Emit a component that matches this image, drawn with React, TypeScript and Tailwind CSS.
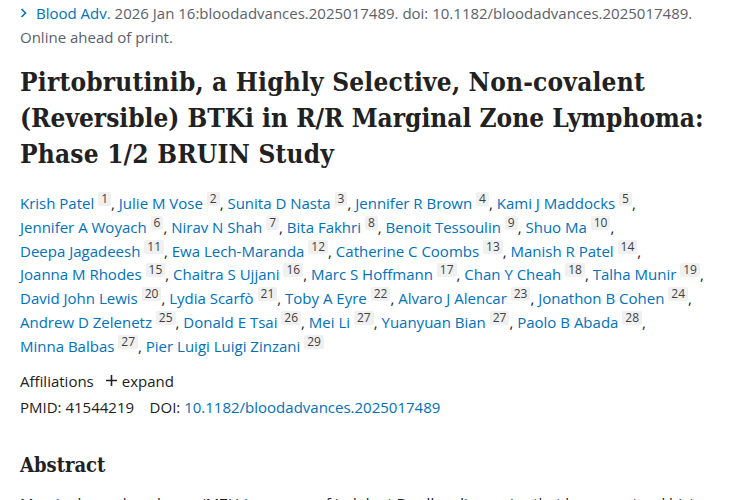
const authorLines: [string, number][][] = [
  [['Krish Patel', 1], ['Julie M Vose', 2], ['Sunita D Nasta', 3], ['Jennifer R Brown', 4], ['Kami J Maddocks', 5]],
  [['Jennifer A Woyach', 6], ['Nirav N Shah', 7], ['Bita Fakhri', 8], ['Benoit Tessoulin', 9], ['Shuo Ma', 10]],
  [['Deepa Jagadeesh', 11], ['Ewa Lech-Maranda', 12], ['Catherine C Coombs', 13], ['Manish R Patel', 14]],
  [['Joanna M Rhodes', 15], ['Chaitra S Ujjani', 16], ['Marc S Hoffmann', 17], ['Chan Y Cheah', 18], ['Talha Munir', 19]],
  [['David John Lewis', 20], ['Lydia Scarfò', 21], ['Toby A Eyre', 22], ['Alvaro J Alencar', 23], ['Jonathon B Cohen', 24]],
  [['Andrew D Zelenetz', 25], ['Donald E Tsai', 26], ['Mei Li', 27], ['Yuanyuan Bian', 27], ['Paolo B Abada', 28]],
  [['Minna Balbas', 27], ['Pier Luigi Luigi Zinzani', 29]],
]

function Author({ name, n, last }: { name: string; n: number; last: boolean }) {
  return (
    <span>
      <a className="text-[#0071bc]">{name}</a>{' '}
      <span className="relative -top-[6px] inline-block rounded-[2px] bg-[#f0f0f0] px-[3px] text-[12px] leading-[14px] text-[#3f3f3f]">
        {n}
      </span>
      {!last && <span className="text-[#212121]">, </span>}
    </span>
  )
}

export default function App() {
  return (
    <div className="h-[500px] w-[750px] overflow-hidden bg-white pl-[20px] text-[#212121] font-['Open_Sans','Noto_Sans',sans-serif]">
      {/* Citation */}
      <div className="pt-[1px] text-[15px] leading-[24px] text-[#5b616b]">
        <div className="flex items-center whitespace-nowrap">
          <svg className="mr-[8px] h-[10px] w-[8px]" viewBox="0 0 8 10" fill="none">
            <path d="M1.5 1l4 4-4 4" stroke="#0071bc" strokeWidth="1.6" />
          </svg>
          <span className="text-[#0071bc]">Blood Adv.</span>
          <span>&nbsp;2026 Jan 16:bloodadvances.2025017489. doi: 10.1182/bloodadvances.2025017489.</span>
        </div>
        <div>Online ahead of print.</div>
      </div>

      {/* Title */}
      <h1 className="mt-[15px] whitespace-nowrap text-[26px] font-bold leading-[36px] tracking-[0.2px] text-[#212121] font-['DejaVu_Serif_Condensed','DejaVu_Serif',serif]">
        <div>Pirtobrutinib, a Highly Selective, Non-covalent</div>
        <div className="tracking-[0px]">(Reversible) BTKi in R/R Marginal Zone Lymphoma:</div>
        <div>Phase 1/2 BRUIN Study</div>
      </h1>

      {/* Authors */}
      <div className="mt-[20px] text-[15px] leading-[23.8px]">
        {authorLines.map((line, i) => (
          <div key={i} className="whitespace-nowrap">
            {line.map(([name, n], j) => (
              <Author key={j} name={name} n={n} last={i === authorLines.length - 1 && j === line.length - 1} />
            ))}
          </div>
        ))}
      </div>

      {/* Affiliations */}
      <div className="mt-[10px] flex items-center text-[15px] leading-[24px]">
        <span>Affiliations</span>
        <span className="ml-[12px] flex items-center">
          <svg className="mr-[5px] h-[11px] w-[11px]" viewBox="0 0 11 11">
            <path d="M5.5 0v11M0 5.5h11" stroke="#212121" strokeWidth="1.6" />
          </svg>
          expand
        </span>
      </div>
      <div className="mt-[2px] text-[15px] leading-[24px]">
        PMID: 41544219&nbsp;&nbsp;&nbsp; DOI: <a className="text-[#0071bc]">10.1182/bloodadvances.2025017489</a>
      </div>

      {/* Abstract */}
      <h2 className="mt-[32px] text-[20px] font-bold leading-[28px] font-['DejaVu_Serif_Condensed','DejaVu_Serif',serif]">Abstract</h2>
      <p className="mt-[12px] whitespace-nowrap text-[15px] leading-[24px]">
        Marginal zone lymphoma (MZL) is a group of indolent B-cell malignancies that have a natural history
      </p>
    </div>
  )
}
